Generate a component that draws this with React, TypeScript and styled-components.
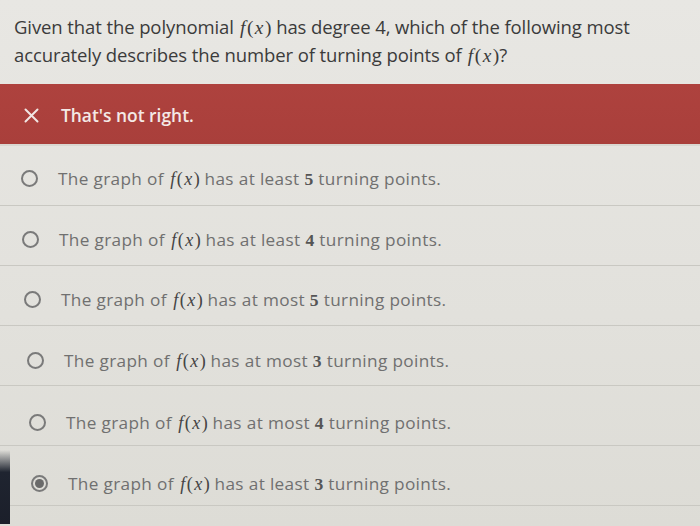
import React from "react";
import styled, { createGlobalStyle } from "styled-components";

const Global = createGlobalStyle`
  html, body { margin: 0; padding: 0; background: #e3e2dd; overflow: hidden; }
  body { font-family: "Open Sans", "Liberation Sans", sans-serif; }
`;

const Page = styled.div`
  width: 700px;
  height: 526px;
  background: linear-gradient(180deg, #e8e7e3 0%, #e2e1dc 60%, #dddcd6 100%);
  display: flex;
  flex-direction: column;
  position: relative;
  overflow: hidden;
`;

const Question = styled.div`
  padding: 13px 14px 0 14px;
  height: 71px;
  box-sizing: content-box;
  font-size: 18.5px;
  line-height: 27px;
  color: #3b3b3b;
  letter-spacing: -0.1px;
`;

const QLine = styled.div`
  white-space: nowrap;
`;

const Math = styled.span<{ $color?: string }>`
  font-family: "Liberation Serif", "DejaVu Serif", serif;
  font-size: 1.05em;
  white-space: nowrap;
  color: ${(p) => p.$color || "inherit"};
  letter-spacing: 0;
`;

const Var = styled.span`
  font-style: italic;
  padding: 0 1.5px;
`;

const Banner = styled.div`
  height: 62px;
  box-sizing: border-box;
  background: linear-gradient(180deg, #ae423e 0%, #a93f3b 100%);
  display: flex;
  align-items: center;
  padding: 2px 0 0 24px;
  gap: 22px;
  color: #f4e9e6;
  font-size: 17.4px;
  font-weight: 600;
  border-bottom: 2px solid #d9d7d1;
`;

const List = styled.div`
  display: flex;
  flex-direction: column;
`;

const Row = styled.div<{ $indent: number; $drop: number }>`
  height: 60px;
  box-sizing: border-box;
  display: flex;
  align-items: center;
  padding: ${(p) => p.$drop * 2}px 0 0 ${(p) => p.$indent}px;
  gap: 20px;
  border-bottom: 1px solid #c9c8c2;
  color: #707070;
  font-size: 17.2px;
  letter-spacing: 0.35px;
  white-space: nowrap;
`;

const Radio = styled.span<{ $checked?: boolean }>`
  width: 13px;
  height: 13px;
  border-radius: 50%;
  border: 2.5px solid #7a7a7a;
  flex: none;
  display: flex;
  align-items: center;
  justify-content: center;
  &::after {
    content: "";
    width: 9px;
    height: 9px;
    border-radius: 50%;
    background: ${(p) => (p.$checked ? "#6a6a6a" : "transparent")};
  }
`;

const Num = styled.span`
  font-family: "Liberation Serif", "DejaVu Serif", serif;
  font-weight: 700;
  color: #555;
  font-size: 1.02em;
`;

const Bezel = styled.div`
  position: absolute;
  left: 0;
  top: 450px;
  width: 10px;
  height: 74px;
  background: linear-gradient(180deg, rgba(30, 34, 44, 0) 0%, #1f2430 30%, #1b1f2a 100%);
`;

const Fx = ({ color }: { color?: string }) => (
  <Math $color={color}>
    <Var>f</Var>(<Var>x</Var>)
  </Math>
);

const options: { word: string; n: string; checked?: boolean; indent: number; drop: number }[] = [
  { word: "at least", n: "5", indent: 21, drop: 3 },
  { word: "at least", n: "4", indent: 22, drop: 4 },
  { word: "at most", n: "5", indent: 24, drop: 4 },
  { word: "at most", n: "3", indent: 27, drop: 5 },
  { word: "at most", n: "4", indent: 29, drop: 7 },
  { word: "at least", n: "3", checked: true, indent: 31, drop: 8 },
];

export default function App() {
  return (
    <Page>
      <Global />
      <Question>
        <QLine>
          Given that the polynomial <Fx /> has degree 4, which of the following most
        </QLine>
        <QLine>
          accurately describes the number of turning points of <Fx />?
        </QLine>
      </Question>
      <Banner>
        <svg width="15" height="15" viewBox="0 0 15 15" aria-hidden="true">
          <path d="M1.5 1.5 L13.5 13.5 M13.5 1.5 L1.5 13.5" stroke="#f1e6e3" strokeWidth="2" strokeLinecap="round" />
        </svg>
        <span>That's not right.</span>
      </Banner>
      <List>
        {options.map((o, i) => (
          <Row key={i} $indent={o.indent} $drop={o.drop}>
            <Radio $checked={o.checked} />
            <span>
              The graph of <Fx color="#444" /> has {o.word} <Num>{o.n}</Num> turning points.
            </span>
          </Row>
        ))}
      </List>
      <Bezel />
    </Page>
  );
}
